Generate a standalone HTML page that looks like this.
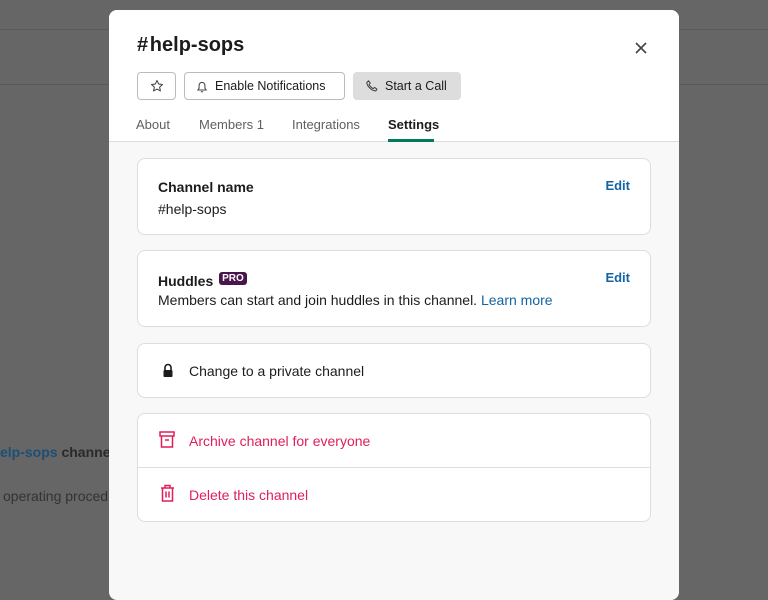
<!DOCTYPE html>
<html><head><style>
*{box-sizing:border-box;margin:0;padding:0}
body{width:768px;height:587px;overflow:hidden;background:#666;font-family:"Liberation Sans",sans-serif;position:relative}
.l1{position:absolute;left:0;right:0;top:29px;height:1px;background:#5a5a5a}
.l2{position:absolute;left:0;right:0;top:84px;height:1px;background:#5a5a5a}
.bg1{position:absolute;left:0;top:444px;font-size:14px;color:#2a2a2a;font-weight:bold}
.bg1 span{color:#1c4f75}
.bg2{position:absolute;left:3px;top:488px;font-size:14px;color:#333}
.modal{position:absolute;left:109px;top:10px;width:570px;height:590px;background:#f8f8f8;border-radius:8px;overflow:hidden}
.head{background:#fff;height:132px;border-bottom:1px solid #ddd;position:relative}
h1{position:absolute;left:28px;top:24px;font-size:20px;font-weight:bold;color:#1d1c1d}
.x{position:absolute;left:524px;top:30px}
.btn{position:absolute;top:62px;height:28px;border:1px solid #bbb;border-radius:4px;background:#fff;font-size:12.5px;color:#1d1c1d;display:flex;align-items:center;padding:0 12px;gap:6px;white-space:nowrap}
.tab{position:absolute;top:107px;font-size:13px;color:#616061}
.card{position:absolute;left:28px;width:514px;background:#fff;border:1px solid #ddd;border-radius:8px}
.t{font-size:14px;font-weight:bold;color:#1d1c1d}
.s{font-size:14px;color:#1d1c1d}
.edit{position:absolute;right:20px;font-size:13px;font-weight:bold;color:#1264a3}
.red{color:#e01e5a;font-size:14px}
</style></head><body>
<div class="l1"></div><div class="l2"></div>
<div class="bg1"><span>elp-sops</span> channel</div>
<div class="bg2">operating proced</div>
<div class="modal">
 <div class="head">
  <h1>#&#8202;help-sops</h1>
  <svg class="x" width="16" height="16" viewBox="0 0 16 16"><path d="M3 3L13 13M13 3L3 13" stroke="#444" stroke-width="1.6"/></svg>
  <div class="btn" style="left:28px;width:39px;padding:0;justify-content:center"><svg width="14" height="14" viewBox="0 0 24 24"><path d="M12 2.5l2.9 6.2 6.6.7-5 4.5 1.4 6.6L12 17.2l-5.9 3.3 1.4-6.6-5-4.5 6.6-.7z" fill="none" stroke="#444" stroke-width="1.8" stroke-linejoin="round"/></svg></div>
  <div class="btn" style="left:75px;width:161px;padding:0 10px"><svg width="14" height="15" viewBox="0 0 24 24"><path d="M5 18h14l-2-3V10a5 5 0 0 0-10 0v5zM10 21h4" fill="none" stroke="#444" stroke-width="1.8"/></svg>Enable Notifications</div>
  <div class="btn" style="left:244px;width:108px;background:#ddd;border-color:#ddd;padding:0 11px"><svg width="14" height="14" viewBox="0 0 24 24"><path d="M6 3l3 4-2 2.5c1.5 3 4 5.5 7 7l2.5-2 4 3-2 3C11 20 4 13 3 6z" fill="none" stroke="#444" stroke-width="1.8" stroke-linejoin="round"/></svg>Start a Call</div>
  <div class="tab" style="left:27px">About</div>
  <div class="tab" style="left:90px">Members 1</div>
  <div class="tab" style="left:183px">Integrations</div>
  <div class="tab" style="left:279px;color:#1d1c1d;font-weight:bold">Settings</div>
  <div style="position:absolute;left:279px;width:46px;top:129px;height:3px;background:#007a5a"></div>
 </div>
 <div class="card" style="top:148px;height:77px">
  <div class="t" style="position:absolute;left:20px;top:20px">Channel name</div>
  <div class="s" style="position:absolute;left:20px;top:42px">#help-sops</div>
  <div class="edit" style="top:19px">Edit</div>
 </div>
 <div class="card" style="top:240px;height:77px">
  <div class="t" style="position:absolute;left:20px;top:21px">Huddles <span style="display:inline-block;background:#4a154b;color:#fff;font-size:10px;padding:1px 3px;border-radius:3px;vertical-align:5px;margin-left:2px">PRO</span></div>
  <div class="s" style="position:absolute;left:20px;top:41px">Members can start and join huddles in this channel. <span style="color:#1264a3">Learn more</span></div>
  <div class="edit" style="top:19px">Edit</div>
 </div>
 <div class="card" style="top:333px;height:55px">
  <svg style="position:absolute;left:24px;top:19px" width="12" height="15" viewBox="0 0 12 15"><path d="M3 7V4.5a3 3 0 0 1 6 0V7" fill="none" stroke="#1d1c1d" stroke-width="1.6"/><rect x="1.5" y="7" width="9" height="7" rx="1" fill="#1d1c1d"/></svg>
  <div class="s" style="position:absolute;left:51px;top:19px">Change to a private channel</div>
 </div>
 <div class="card" style="top:403px;height:109px">
  <svg style="position:absolute;left:21px;top:17px" width="16" height="18" viewBox="0 0 16 18"><rect x="1" y="1" width="14" height="4" fill="none" stroke="#e01e5a" stroke-width="1.5"/><path d="M2.5 5v11h11V5M6 9h4" fill="none" stroke="#e01e5a" stroke-width="1.5"/></svg>
  <div class="red" style="position:absolute;left:51px;top:19px">Archive channel for everyone</div>
  <div style="position:absolute;left:0;right:0;top:53px;height:1px;background:#ddd"></div>
  <svg style="position:absolute;left:22px;top:70px" width="15" height="18" viewBox="0 0 15 18"><path d="M1 4h13M5 4V1.5h5V4M2.5 4v13h10V4M6 7.5v6M9 7.5v6" fill="none" stroke="#e01e5a" stroke-width="1.5"/></svg>
  <div class="red" style="position:absolute;left:51px;top:73px">Delete this channel</div>
 </div>
</div>
</body></html>
